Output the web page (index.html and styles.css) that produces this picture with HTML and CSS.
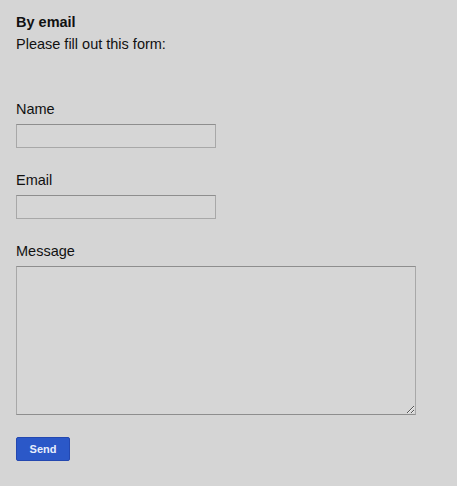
FILE: index.html
```html
<!DOCTYPE html>
<html lang="en">
<head>
    <meta charset="UTF-8">
    <meta name="viewport" content="width=device-width, initial-scale=1.0">
    <title>Contact</title>
    <link rel="stylesheet" href="styles.css">
</head>
<body>
    <section class="contact">
        <div class="intro">
            <div class="title">By email</div>
            <div>Please fill out this form:</div>
        </div>
        <form class="form">
            <label class="field">
                <span class="label">Name</span>
                <input type="text" class="input">
            </label>
            <label class="field">
                <span class="label">Email</span>
                <input type="text" class="input">
            </label>
            <label class="field">
                <span class="label">Message</span>
                <textarea class="message"></textarea>
            </label>
            <button type="button" class="send">Send</button>
        </form>
    </section>
</body>
</html>
```

FILE: styles.css
```css
*{
    box-sizing: border-box;
}
body{
    margin: 0;
    padding: 0;
    background-color: #d5d5d5;
    font-family: "Liberation Sans", Arial, sans-serif;
    font-size: 14.5px;
    color: #111;
}
.contact{
    padding: 11px 16px 0 16px;
}
.intro{
    line-height: 22px;
    margin-bottom: 44px;
}
.title{
    font-weight: bold;
}
.form{
    display: flex;
    flex-direction: column;
    align-items: flex-start;
}
.field{
    display: flex;
    flex-direction: column;
    margin-bottom: 22px;
}
.label{
    line-height: 20px;
    margin-bottom: 5px;
}
.input{
    width: 200px;
    height: 24px;
    margin: 0;
    background-color: #d6d6d6;
    border: 1px solid #a8a8a8;
    border-top-color: #8e8e8e;
    border-radius: 0;
}
.message{
    width: 400px;
    height: 149px;
    margin: 0;
    background-color: #d6d6d6;
    border: 1px solid #a8a8a8;
    border-top-color: #8e8e8e;
    border-bottom-color: #8e8e8e;
    border-radius: 0;
    resize: both;
}
.send{
    width: 54px;
    height: 24px;
    padding: 0;
    border: 1px solid #2448b0;
    border-radius: 2px;
    background-color: #2b58c8;
    color: #e8eefc;
    font-family: "Liberation Sans", Arial, sans-serif;
    font-size: 11px;
    font-weight: bold;
}
```
